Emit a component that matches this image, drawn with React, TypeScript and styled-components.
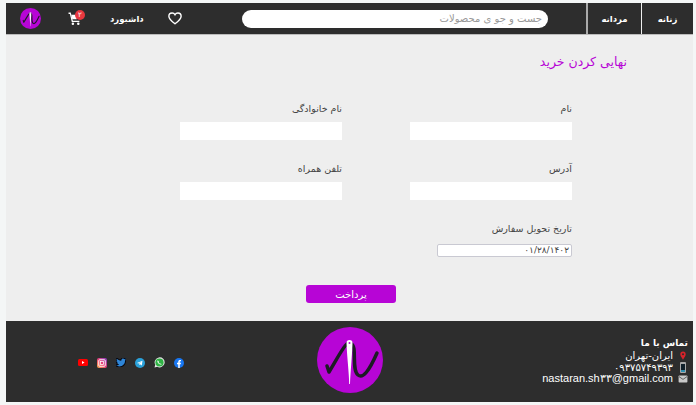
import React from "react";
import styled, { createGlobalStyle } from "styled-components";

const GlobalStyle = createGlobalStyle`
  html, body {
    margin: 0;
    padding: 0;
    background: #f4f6f6;
  }
  body {
    font-family: "DejaVu Sans", "Noto Sans", sans-serif;
  }
`;

const Page = styled.div`
  width: 696px;
  height: 405px;
  box-sizing: border-box;
  padding: 3px 3px 3px 6px;
  display: flex;
  flex-direction: column;
  overflow: hidden;
`;

const Header = styled.header`
  height: 31px;
  flex: none;
  background: #2d2d2d;
  border-bottom: 1px solid #bbb;
  display: flex;
  align-items: stretch;
  direction: rtl;
`;

const Nav = styled.nav`
  display: flex;
`;

const NavItem = styled.a<{ $w: number; $line: string; $lineWidth: number }>`
  width: ${(p) => p.$w}px;
  box-sizing: border-box;
  display: flex;
  align-items: center;
  justify-content: center;
  color: #fff;
  font-size: 8.5px;
  font-weight: bold;
  border-left: ${(p) => p.$lineWidth}px solid ${(p) => p.$line};
`;

const Search = styled.div`
  margin: 7px 38px 0 0;
  width: 306px;
  height: 18px;
  border-radius: 9px;
  background: #fff;
  color: #999;
  font-size: 10px;
  line-height: 18px;
  padding-right: 6px;
  box-sizing: border-box;
`;

const Tools = styled.div`
  display: flex;
  align-items: center;
  margin: 0 auto 0 14px;
`;

const IconLink = styled.span`
  display: flex;
  position: relative;
`;

const LogoLink = styled(IconLink)`
  margin-right: 27px;
`;

const Dashboard = styled.span`
  color: #fff;
  font-size: 8.5px;
  font-weight: bold;
  margin: 0 24px 0 29px;
`;

const CartBadge = styled.span`
  position: absolute;
  top: -2px;
  right: -4px;
  width: 10px;
  height: 10px;
  border-radius: 50%;
  background: #e8383f;
  color: #fff;
  font-size: 7px;
  line-height: 10px;
  text-align: center;
`;

const Main = styled.main`
  flex: 1;
  background: #eeeeee;
  direction: rtl;
  padding: 19px 66px 0 0;
`;

const Title = styled.h1`
  margin: 0;
  font-size: 12.5px;
  font-weight: normal;
  color: #b705d6;
  line-height: 16px;
`;

const Form = styled.form`
  margin: 32px 55px 0 0;
  display: grid;
  grid-template-columns: 162px 162px;
  column-gap: 68px;
`;

const Field = styled.label`
  display: flex;
  flex-direction: column;
  gap: 6px;
  height: 60px;
  color: #444;
  font-size: 9.5px;
  line-height: 14px;
`;

const TextInput = styled.div`
  height: 18px;
  background: #fff;
`;

const DateInput = styled.div`
  height: 11px;
  margin-top: 2px;
  background: #fff;
  border: 1px solid #c9c9d2;
  border-radius: 2px;
  font-size: 9px;
  line-height: 11px;
  color: #444;
  padding-right: 2px;
  width: 131px;
`;

const PayButton = styled.button`
  display: block;
  margin: 0;
  width: 90px;
  height: 18px;
  border: none;
  border-radius: 3px;
  background: #b705d6;
  color: #fff;
  font-family: inherit;
  font-size: 10px;
  padding: 0;
`;

const PayRow = styled.div`
  margin: 3px 231px 0 0;
  display: flex;
`;

const Footer = styled.footer`
  height: 81px;
  flex: none;
  background: #2d2d2d;
  display: grid;
  grid-template-columns: 237px 1fr 237px;
  align-items: center;
  direction: rtl;
  padding-bottom: 3px;
  box-sizing: border-box;
`;

const Contact = styled.div`
  align-self: start;
  color: #fff;
  font-size: 10px;
  line-height: 11.5px;
  padding-top: 17px;
  margin-right: 5px;
`;

const ContactHead = styled.div`
  font-weight: bold;
  font-size: 9px;
  line-height: 11px;
  margin-bottom: 1px;
`;

const ContactRow = styled.div`
  display: flex;
  align-items: center;
  gap: 5px;
  white-space: nowrap;
`;

const IconSlot = styled.span`
  width: 10px;
  display: flex;
  justify-content: center;
`;

const Email = styled.span`
  font-family: "Liberation Sans", sans-serif;
  font-size: 11px;
`;

const LogoCell = styled.div`
  display: flex;
  justify-content: center;
`;

const Socials = styled.div`
  display: flex;
  align-items: center;
  gap: 9px;
  margin-right: 59px;
  padding-top: 5px;
`;

function Logo({ size }: { size: number }) {
  return (
    <svg width={size} height={size} viewBox="0 0 66 66">
      <circle cx="33" cy="33" r="33" fill="#b705d6" />
      <path
        d="M10 39 L12 45 C18 35 24 24 28 19 C31 15 36 15 37 22 C38 30 36 44 41 48 C46 52 52 44 60 26"
        fill="none"
        stroke="#1c1c24"
        strokeWidth="3.5"
        strokeLinecap="round"
        strokeLinejoin="round"
      />
      <path d="M29.500 16 a3 3 0 0 1 6 0 C35 30 33.500 45 33 57 H32.200 C32 45 30 30 29.500 16 Z" fill="#fff" />
      <circle cx="32.500" cy="16" r="1" fill="#b705d6" />
    </svg>
  );
}

const Heart = () => (
  <svg width="14" height="13" viewBox="0 0 24 22" fill="none" stroke="#fff" strokeWidth="2.4">
    <path d="M12 20 C4 14 1.500 10.500 1.500 7 C1.500 3.500 4 1.500 7 1.500 C9 1.500 11 2.500 12 4.500 C13 2.500 15 1.500 17 1.500 C20 1.500 22.500 3.500 22.500 7 C22.500 10.500 20 14 12 20 Z" />
  </svg>
);

const Cart = () => (
  <svg width="13" height="13" viewBox="0 0 24 24" fill="#fff">
    <path d="M1 1 H5 L9 16 H21 V18.500 H7 L3.500 3.500 H1 Z" />
    <path d="M6 5 H16 V13.500 H8 Z" />
    <circle cx="9" cy="21.500" r="2.300" />
    <circle cx="19" cy="21.500" r="2.300" />
  </svg>
);

const Facebook = () => (
  <svg width="10" height="10" viewBox="0 0 20 20">
    <circle cx="10" cy="10" r="10" fill="#1877f2" />
    <path d="M8.500 20 V12.500 H6 V9.500 H8.500 V7.500 C8.500 5 10 3.800 12 3.800 H14 V6.500 H12.700 C11.700 6.500 11.500 7 11.500 7.800 V9.500 H14 L13.500 12.500 H11.500 V20 Z" fill="#fff" />
  </svg>
);

const Whatsapp = () => (
  <svg width="11" height="11" viewBox="0 0 22 22">
    <path d="M1 21 L2.500 15.500 A10 10 0 1 1 6.500 19.500 Z" fill="#e8e8e8" />
    <circle cx="11" cy="11" r="8.200" fill="#2fb344" />
    <path d="M7.500 6.500 C6 8 7 11 9 13 C11 15 14 16 15.500 14.500 L13.500 12.800 L12.500 13.500 C11 13 9.500 11.500 9 10 L9.800 9 Z" fill="#fff" />
  </svg>
);

const Telegram = () => (
  <svg width="10" height="10" viewBox="0 0 20 20">
    <circle cx="10" cy="10" r="10" fill="#2aa1da" />
    <path d="M4 10 L15 5.500 L13.500 15 L10 12.500 L8.500 14 L8 11.500 L13 7.500 L6.500 11 Z" fill="#fff" />
  </svg>
);

const Twitter = () => (
  <svg width="10" height="9" viewBox="0 0 24 20">
    <path
      d="M24 2.500 C23 3 22 3.300 21 3.400 C22 2.800 23 1.800 23.300 .600 C22.300 1.200 21.200 1.600 20 1.900 C18 -.5 13 .5 12.500 5.500 C8 5.300 4.500 3.300 2 .800 C.800 3 1.500 5.500 3.500 7 C2.700 7 2 6.800 1.300 6.400 C1.300 8.800 3 10.700 5.200 11.200 C4.500 11.400 3.800 11.400 3.100 11.300 C3.700 13.200 5.500 14.600 7.700 14.700 C5.500 16.400 3 17.100 0 16.800 C2.500 18.400 5 19.400 8 19.400 C17 19.400 22 12 21.600 5.100 C22.600 4.500 23.400 3.500 24 2.500 Z"
      fill="#2f86d8"
      stroke="#08080f"
      strokeWidth="5"
      paintOrder="stroke"
    />
  </svg>
);

const Instagram = () => (
  <svg width="10" height="10" viewBox="0 0 20 20">
    <defs>
      <linearGradient id="ig" x1="0" y1="1" x2="1" y2="0">
        <stop offset="0" stopColor="#fdb04b" />
        <stop offset=".5" stopColor="#e8407a" />
        <stop offset="1" stopColor="#7a3fc4" />
      </linearGradient>
    </defs>
    <rect width="20" height="20" rx="4" fill="url(#ig)" />
    <rect x="3.500" y="3.500" width="13" height="13" rx="2" fill="none" stroke="#fff" strokeWidth="1.800" />
    <rect x="7" y="7" width="6" height="6" fill="none" stroke="#fff" strokeWidth="1.500" />
  </svg>
);

const Youtube = () => (
  <svg width="10" height="7" viewBox="0 0 20 14">
    <rect width="20" height="14" rx="3" fill="#f00" />
    <path d="M8 4 L13 7 L8 10 Z" fill="#fff" />
  </svg>
);

const Pin = () => (
  <svg width="6" height="9" viewBox="0 0 10 14">
    <path d="M5 14 C2 9 .5 7 .5 4.800 A4.500 4.500 0 0 1 9.500 4.800 C9.500 7 8 9 5 14 Z" fill="#d8232a" />
    <circle cx="5" cy="4.800" r="1.700" fill="#2d2d2d" />
  </svg>
);

const Phone = () => (
  <svg width="6" height="11" viewBox="0 0 6 11">
    <rect width="6" height="11" rx="1" fill="#a8a8a8" />
    <rect x="1" y="2" width="4" height="6" fill="#10202a" />
    <rect x="1" y="8" width="4" height="2" fill="#2f8fb0" />
  </svg>
);

const Mail = () => (
  <svg width="10" height="8" viewBox="0 0 12 10">
    <rect x=".5" y=".5" width="11" height="9" rx="1" fill="#c8c8c8" />
    <path d="M1 2 L6 5.500 L11 2" fill="none" stroke="#444" />
  </svg>
);

export default function App() {
  return (
    <Page>
      <GlobalStyle />
      <Header>
        <Nav>
          <NavItem $w={52} $line="#eee" $lineWidth={1}>زنانه</NavItem>
          <NavItem $w={55} $line="#aaa" $lineWidth={2}>مردانه</NavItem>
        </Nav>
        <Search>جست و جو ی محصولات</Search>
        <Tools>
          <IconLink>
            <Heart />
          </IconLink>
          <Dashboard>داشبورد</Dashboard>
          <IconLink>
            <Cart />
            <CartBadge>۲</CartBadge>
          </IconLink>
          <LogoLink>
            <Logo size={21} />
          </LogoLink>
        </Tools>
      </Header>
      <Main>
        <Title>نهایی کردن خرید</Title>
        <Form>
          <Field>
            نام
            <TextInput />
          </Field>
          <Field>
            نام خانوادگی
            <TextInput />
          </Field>
          <Field>
            آدرس
            <TextInput />
          </Field>
          <Field>
            تلفن همراه
            <TextInput />
          </Field>
          <Field>
            تاریخ تحویل سفارش
            <DateInput>۰۱/۲۸/۱۴۰۲</DateInput>
          </Field>
        </Form>
        <PayRow>
          <PayButton type="button">پرداخت</PayButton>
        </PayRow>
      </Main>
      <Footer>
        <Contact>
          <ContactHead>تماس با ما</ContactHead>
          <ContactRow>
            <IconSlot><Pin /></IconSlot>
            ایران-تهران
          </ContactRow>
          <ContactRow>
            <IconSlot><Phone /></IconSlot>
            ۰۹۳۷۵۷۴۹۳۹۳
          </ContactRow>
          <ContactRow>
            <IconSlot><Mail /></IconSlot>
            <Email>nastaran.sh۳۳@gmail.com</Email>
          </ContactRow>
        </Contact>
        <LogoCell>
          <Logo size={66} />
        </LogoCell>
        <Socials>
          <Facebook />
          <Whatsapp />
          <Telegram />
          <Twitter />
          <Instagram />
          <Youtube />
        </Socials>
      </Footer>
    </Page>
  );
}
